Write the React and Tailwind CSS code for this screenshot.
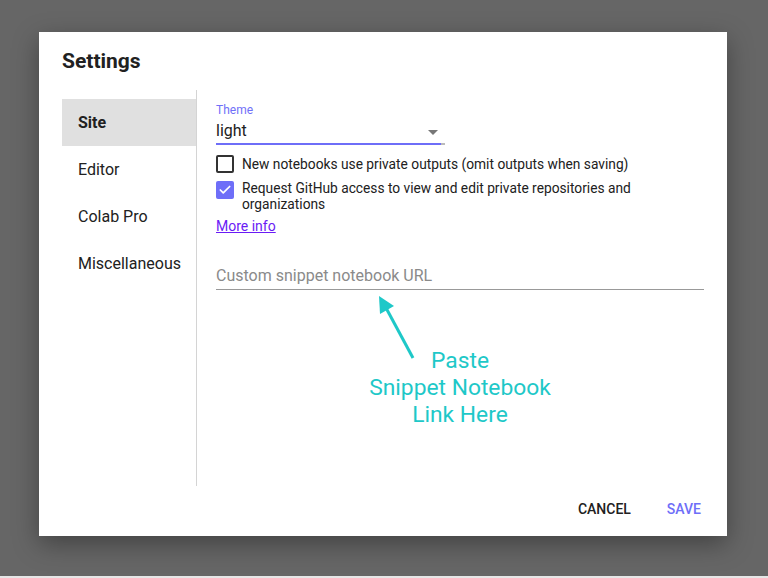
import { Check } from 'lucide-react';

const navItems = ['Site', 'Editor', 'Colab Pro', 'Miscellaneous'];

function Checkbox({ checked }) {
  return checked ? (
    <span className="mt-[1px] flex h-[18px] w-[18px] shrink-0 items-center justify-center rounded-[2px] bg-[#6e6ef8]">
      <Check size={14} strokeWidth={3} color="white" />
    </span>
  ) : (
    <span className="mt-[1px] h-[18px] w-[18px] shrink-0 rounded-[2px] border-2 border-[#333]" />
  );
}

function Arrow() {
  return (
    <svg width="50" height="70" viewBox="0 0 50 70" className="absolute left-[365px] top-[292px]">
      <line x1="48" y1="66" x2="20" y2="14" stroke="#1ec8c8" strokeWidth="3" />
      <polygon points="14,4 15,22 29,14" fill="#1ec8c8" />
    </svg>
  );
}

export default function App() {
  return (
    <div className="relative h-[578px] w-[768px] bg-[#e6e6e6] font-['Roboto',sans-serif]">
      <div className="h-[576px] bg-[#666666] pt-[32px] pl-[39px]">
        <div className="flex h-[504px] w-[688px] flex-col bg-white shadow-[0_8px_24px_rgba(0,0,0,0.35)]">
          <h1 className="pl-[23px] pt-[17px] text-[21px] font-bold leading-[24px] text-[#212121]">Settings</h1>
          <div className="mt-[17px] flex flex-1">
            <nav className="w-[157px] pl-[23px] pt-[9px]">
              {navItems.map((item, i) => (
                <div
                  key={item}
                  className={`flex h-[47px] items-center pl-[16px] text-[16px] text-[#212121] ${
                    i === 0 ? 'bg-[#e0e0e0] font-bold' : ''
                  }`}
                >
                  {item}
                </div>
              ))}
            </nav>
            <div className="h-[396px] w-[1px] bg-[#d4d4d4]" />
            <div className="flex-1 pl-[19px] pr-[23px] pt-[13px] text-[#212121]">
              <div className="text-[12px] leading-[14px] text-[#7070f8]">Theme</div>
              <div className="relative mt-[2px] w-[229px] pb-[4px]">
                <div className="text-[16px] leading-[24px]">light</div>
                <span className="absolute right-[7px] top-[11px] h-0 w-0 border-x-[5px] border-t-[5px] border-x-transparent border-t-[#777]" />
                <div className="flex h-[2px]">
                  <div className="w-[225px] bg-[#6e6ef8]" />
                  <div className="flex-1 bg-[#bbb]" />
                </div>
              </div>
              <div className="mt-[5px] flex flex-col gap-[7px] text-[13.75px] leading-[16px]">
                <label className="flex items-start gap-[8px]">
                  <Checkbox />
                  <span className="pt-[2px]">New notebooks use private outputs (omit outputs when saving)</span>
                </label>
                <label className="flex items-start gap-[8px]">
                  <Checkbox checked />
                  <span className="pt-[0px]">Request GitHub access to view and edit private repositories and organizations</span>
                </label>
              </div>
              <a className="mt-[6px] inline-block text-[14px] leading-[16px] text-[#6a1bf5] underline">More info</a>
              <div className="mt-[28px] border-b border-[#999] pb-[3px] text-[16px] leading-[20px] text-[#8a8a8a]">
                Custom snippet notebook URL
              </div>
            </div>
          </div>
          <div className="flex justify-end gap-[36px] pb-[19px] pr-[26px] text-[14px] font-medium leading-[16px]">
            <button className="text-[#212121]">CANCEL</button>
            <button className="text-[#6e6ef8]">SAVE</button>
          </div>
        </div>
      </div>
      <Arrow />
      <div className="absolute left-[330px] top-[347px] w-[260px] text-center text-[22.8px] leading-[27px] text-[#1ec8c8]">
        Paste
        <br />
        Snippet Notebook
        <br />
        Link Here
      </div>
    </div>
  );
}
